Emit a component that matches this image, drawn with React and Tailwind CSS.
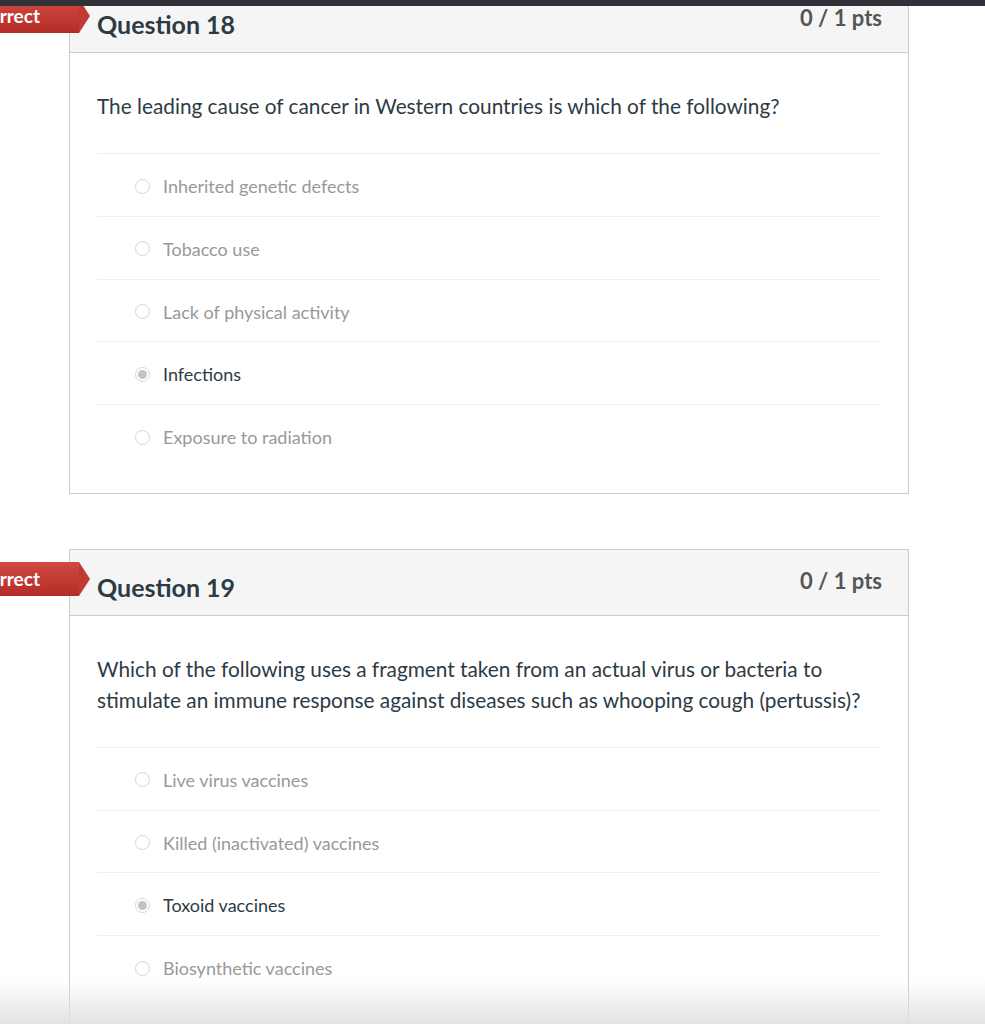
import React from "react";

const font = { fontFamily: "Lato, 'Open Sans', sans-serif" };

function Radio({ selected }) {
  return (
    <span className="flex h-[15px] w-[15px] shrink-0 items-center justify-center rounded-full border border-[#d6d6d6] bg-white">
      {selected && <span className="h-[9px] w-[9px] rounded-full bg-[#c4c4c4]" />}
    </span>
  );
}

function Ribbon() {
  return (
    <div className="absolute left-[-129px] top-[12px] flex h-[34px]">
      <div className="flex h-[34px] w-[138px] items-center justify-end bg-gradient-to-b from-[#d04a42] to-[#b32b26] pr-[39px] text-[19px] font-bold leading-[20px] text-white">
        Incorrect
      </div>
      <div className="h-0 w-0 border-y-[17px] border-l-[11px] border-y-transparent border-l-[#c03a34]" />
    </div>
  );
}

function Card({ title, text, answers, selected }) {
  return (
    <div className="relative ml-[69px] w-[840px] border border-[#c7cdd1] bg-white">
      <Ribbon />
      <div className="flex h-[66px] justify-between border-b border-[#c7cdd1] bg-[#f5f5f5] pl-[27px] pr-[26px]">
        <div className="pt-[22px] text-[25px] font-bold leading-[30px] text-[#2d3b45]">{title}</div>
        <div className="pt-[18px] text-[22px] font-bold leading-[26px] text-[#555555]">0 / 1 pts</div>
      </div>
      <div className="px-[27px] pb-[26px] pt-[37px]">
        <div className="mb-[32px] text-[20.8px] leading-[31px] text-[#2d3b45]">{text}</div>
        {answers.map((a, i) => (
          <div
            key={i}
            className="flex h-[62.75px] items-start gap-[13px] border-t border-[#efefef] pl-[38px] pt-[20px]"
          >
            <span className="flex h-[24px] items-center">
              <Radio selected={i === selected} />
            </span>
            <span
              className={
                "text-[18px] leading-[24px] " +
                (i === selected ? "text-[#2d3b45]" : "text-[#999999]")
              }
            >
              {a}
            </span>
          </div>
        ))}
      </div>
    </div>
  );
}

export default function App() {
  return (
    <div className="relative h-[1024px] w-[985px] overflow-hidden bg-white" style={font}>
      <div className="mt-[-14px] flex flex-col gap-[55px]">
        <Card
          title="Question 18"
          text="The leading cause of cancer in Western countries is which of the following?"
          answers={[
            "Inherited genetic defects",
            "Tobacco use",
            "Lack of physical activity",
            "Infections",
            "Exposure to radiation",
          ]}
          selected={3}
        />
        <Card
          title="Question 19"
          text="Which of the following uses a fragment taken from an actual virus or bacteria to stimulate an immune response against diseases such as whooping cough (pertussis)?"
          answers={[
            "Live virus vaccines",
            "Killed (inactivated) vaccines",
            "Toxoid vaccines",
            "Biosynthetic vaccines",
          ]}
          selected={2}
        />
      </div>
      <div className="absolute left-0 right-0 top-0 h-[6px] bg-[#2f3236]" />
      <div className="pointer-events-none absolute bottom-0 left-0 right-0 h-[44px] bg-gradient-to-b from-[rgba(230,230,230,0)] to-[rgba(225,225,225,0.95)]" />
    </div>
  );
}
